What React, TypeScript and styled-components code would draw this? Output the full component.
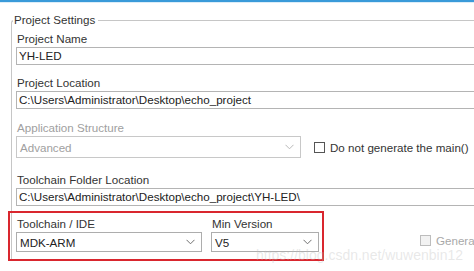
import React from 'react'
import styled, { createGlobalStyle } from 'styled-components'

const GlobalStyle = createGlobalStyle`
    html, body {
        margin: 0;
        padding: 0;
        background: #ffffff;
    }
    body {
        font-family: 'Liberation Sans', Arial, sans-serif;
        font-size: 11.6px;
        color: #333333;
    }
`

const Page = styled.div`
    position: relative;
    width: 474px;
    height: 271px;
    overflow: hidden;
    background: #ffffff;
`

const TopBar = styled.div`
    height: 2px;
    background: #3a9ad9;
    border-bottom: 1px solid #dcedf8;
`

const Group = styled.fieldset`
    margin: 10px 0 0 11px;
    padding: 0 0 0 4px;
    width: 540px;
    border: 1px solid #c6c6c6;
    border-right: none;
    border-bottom: none;
    border-radius: 3px 0 0 0;
`

const Legend = styled.legend`
    padding: 0 3px 0 1px;
    margin-left: -3px;
    line-height: 14px;
    font-size: 11.6px;
    color: #333333;
`

const Field = styled.div<{ $top: number }>`
    margin-top: ${(p) => p.$top}px;
    display: flex;
    flex-direction: column;
`

const Label = styled.div<{ $disabled?: boolean }>`
    height: 14px;
    line-height: 14px;
    margin: 0 0 1px 1px;
    color: ${(p) => (p.$disabled ? '#a0a0a0' : '#333333')};
`

const TextBox = styled.div`
    box-sizing: border-box;
    height: 18px;
    width: 520px;
    border: 1px solid #b4b4b4;
    padding: 0 2px;
    line-height: 16px;
    color: #222222;
    white-space: nowrap;
`

const Row = styled.div`
    display: flex;
    align-items: center;
`

const Select = styled.div<{ $w: number; $h: number; $disabled?: boolean }>`
    box-sizing: border-box;
    width: ${(p) => p.$w}px;
    height: ${(p) => p.$h}px;
    border: 1px solid ${(p) => (p.$disabled ? '#c8c8c8' : '#adadad')};
    padding: 0 6px 0 3px;
    display: flex;
    align-items: center;
    justify-content: space-between;
    color: ${(p) => (p.$disabled ? '#a0a0a0' : '#222222')};
`

const Check = styled.label<{ $disabled?: boolean; $left: number }>`
    display: flex;
    align-items: center;
    gap: 5px;
    margin-left: ${(p) => p.$left}px;
    white-space: nowrap;
    color: ${(p) => (p.$disabled ? '#a8a8a8' : '#333333')};
`

const Box = styled.span<{ $disabled?: boolean }>`
    box-sizing: border-box;
    width: 11px;
    height: 11px;
    border: 1px solid ${(p) => (p.$disabled ? '#bdbdbd' : '#555555')};
    background: ${(p) => (p.$disabled ? '#f2f2f2' : '#ffffff')};
`

const Highlight = styled.div`
    box-sizing: border-box;
    margin-left: -8px;
    width: 316px;
    height: 50px;
    border: 2px solid #d9262e;
    padding: 4px 3px 0 6px;
    display: flex;
    gap: 9px;
`

const Column = styled.div`
    display: flex;
    flex-direction: column;
`

const Watermark = styled.div`
    position: absolute;
    left: 256px;
    top: 247px;
    font-size: 14px;
    color: rgba(190, 190, 190, 0.35);
    pointer-events: none;
    white-space: nowrap;
`

const Chevron = ({ disabled }: { disabled?: boolean }) => (
    <svg width="9" height="6" viewBox="0 0 9 6">
        <polyline
            points="0.5,0.8 4.5,4.8 8.5,0.8"
            fill="none"
            stroke={disabled ? '#b8b8b8' : '#707070'}
            strokeWidth="1"
        />
    </svg>
)

export default function App() {
    return (
        <Page>
            <GlobalStyle />
            <TopBar />
            <Group>
                <Legend>Project Settings</Legend>
                <Field $top={5}>
                    <Label>Project Name</Label>
                    <TextBox>YH-LED</TextBox>
                </Field>
                <Field $top={11}>
                    <Label>Project Location</Label>
                    <TextBox>C:\Users\Administrator\Desktop\echo_project</TextBox>
                </Field>
                <Field $top={12}>
                    <Label $disabled>Application Structure</Label>
                    <Row>
                        <Select $w={285} $h={22} $disabled>
                            <span>Advanced</span>
                            <Chevron disabled />
                        </Select>
                        <Check $left={13}>
                            <Box />
                            Do not generate the main()
                        </Check>
                    </Row>
                </Field>
                <Field $top={15}>
                    <Label>Toolchain Folder Location</Label>
                    <TextBox>C:\Users\Administrator\Desktop\echo_project\YH-LED\</TextBox>
                </Field>
                <Row style={{ marginTop: 5 }}>
                    <Highlight>
                        <Column>
                            <Label>Toolchain / IDE</Label>
                            <Select $w={186} $h={20}>
                                <span>MDK-ARM</span>
                                <Chevron />
                            </Select>
                        </Column>
                        <Column>
                            <Label>Min Version</Label>
                            <Select $w={108} $h={20}>
                                <span>V5</span>
                                <Chevron />
                            </Select>
                        </Column>
                    </Highlight>
                    <Check $left={96} $disabled style={{ marginTop: 8 }}>
                        <Box $disabled />
                        Generate Under Root
                    </Check>
                </Row>
            </Group>
            <Watermark>https://blog.csdn.net/wuwenbin12</Watermark>
        </Page>
    )
}
